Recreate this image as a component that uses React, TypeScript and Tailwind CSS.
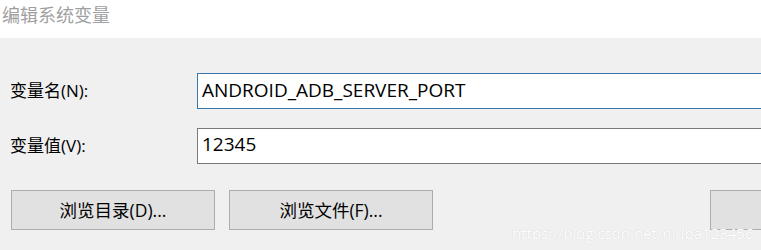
export default function App() {
  const font = { fontFamily: '"Open Sans", "Noto Sans CJK SC", sans-serif' };
  return (
    <div className="w-[761px] h-[250px] overflow-hidden bg-[#f0f0f0] text-black" style={font}>
      {/* Title */}
      <div className="h-[38px] bg-white pl-[2px] pt-[2px] text-[18px] leading-[26px] text-[#a0a0a0]">
        编辑系统变量
      </div>

      <div className="pt-[35px]">
        {/* Name row */}
        <div className="flex items-center">
          <div className="w-[197px] shrink-0 pl-[10px] text-[17px]">变量名(N):</div>
          <div className="h-[36px] w-[600px] shrink-0 border border-[#3a75a8] bg-white pl-[4px] text-[19px] leading-[32px]">
            ANDROID_ADB_SERVER_PORT
          </div>
        </div>

        {/* Value row */}
        <div className="mt-[19px] flex items-center">
          <div className="w-[197px] shrink-0 pl-[10px] text-[17px]">变量值(V):</div>
          <div className="h-[36px] w-[600px] shrink-0 border border-[#7a7a7a] bg-white pl-[4px] text-[19px] leading-[30px]">
            12345
          </div>
        </div>

        {/* Buttons */}
        <div className="relative mt-[26px] flex pl-[11px]">
          <button className="h-[40px] w-[204px] shrink-0 border border-[#adadad] bg-[#e1e1e1] text-[17.5px]">
            浏览目录(D)...
          </button>
          <button className="ml-[14px] h-[40px] w-[204px] shrink-0 border border-[#adadad] bg-[#e1e1e1] text-[17.5px]">
            浏览文件(F)...
          </button>
          <button className="ml-[277px] h-[40px] w-[120px] shrink-0 border border-[#adadad] bg-[#e1e1e1] pl-[50px] text-left text-[17px] text-[#1a4f8a]">
            确定
          </button>
          <div className="absolute left-[512px] top-[32px] text-[15px] text-white [text-shadow:0_0_1px_#c8c8c8]">
            https://blog.csdn.net/niuba123456
          </div>
        </div>
      </div>
    </div>
  );
}
